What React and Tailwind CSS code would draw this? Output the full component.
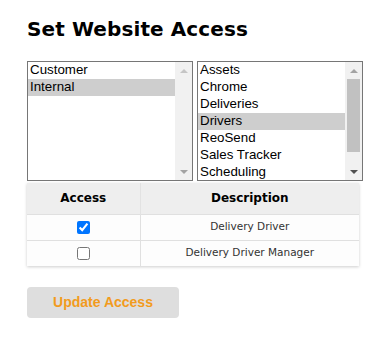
import React, { useState } from 'react';

const groups = ['Customer', 'Internal'];
const sites = ['Assets', 'Chrome', 'Deliveries', 'Drivers', 'ReoSend', 'Sales Tracker', 'Scheduling'];

function ScrollBar({ thumb }) {
  return (
    <div className="w-[17px] shrink-0 bg-[#f1f1f1] flex flex-col items-center">
      <div className="h-[17px] w-full flex items-center justify-center">
        <div className={`w-0 h-0 border-l-[4px] border-r-[4px] border-b-[4px] border-l-transparent border-r-transparent ${thumb ? 'border-b-[#a3a3a3]' : 'border-b-[#c5c5c5]'}`} />
      </div>
      <div className="flex-1 w-full px-[2px]">
        {thumb && <div className="w-full h-[73px] bg-[#c1c1c1]" />}
      </div>
      <div className="h-[17px] w-full flex items-center justify-center">
        <div className={`w-0 h-0 border-l-[4px] border-r-[4px] border-t-[4px] border-l-transparent border-r-transparent ${thumb ? 'border-t-[#505050]' : 'border-t-[#a3a3a3]'}`} />
      </div>
    </div>
  );
}

function ListBox({ items, selected, thumb }) {
  return (
    <div className="w-[166px] h-[120px] border border-[#767676] flex bg-white">
      <div className="flex-1 overflow-hidden">
        {items.map(item => (
          <div
            key={item}
            className={`h-[17px] leading-[16px] pl-[2px] text-[13.33px] text-black ${item === selected ? 'bg-[#cecece]' : ''}`}
          >
            {item}
          </div>
        ))}
      </div>
      <ScrollBar thumb={thumb} />
    </div>
  );
}

export default function App() {
  const [checks, setChecks] = useState([true, false]);
  const roles = ['Delivery Driver', 'Delivery Driver Manager'];

  return (
    <div className="bg-white w-[386px] h-[355px] pl-[27px] pt-[16px] font-['Liberation_Sans',Arial,sans-serif]">
      <h1 className="text-[20px] leading-[26px] font-bold text-black font-['DejaVu_Sans',sans-serif] tracking-[0.1px]">
        Set Website Access
      </h1>

      <div className="flex gap-[4px] mt-[19px]">
        <ListBox items={groups} selected="Internal" />
        <ListBox items={sites} selected="Drivers" thumb />
      </div>

      <table className="w-[332px] border-collapse shadow-[0_1px_3px_rgba(0,0,0,0.2)] mt-[2px] font-['DejaVu_Sans',sans-serif]">
        <thead>
          <tr className="bg-[#eeeeee] h-[31px]">
            <th className="w-[113px] text-[12px] font-bold text-black border-r border-[#e2e2e2]">Access</th>
            <th className="text-[12px] font-bold text-black">Description</th>
          </tr>
        </thead>
        <tbody>
          {roles.map((role, idx) => (
            <tr key={role} className="h-[26px] border-t border-[#e0e0e0] bg-[#fdfdfd]">
              <td className="border-r border-[#e0e0e0] text-center align-middle">
                <input
                  type="checkbox"
                  checked={checks[idx]}
                  onChange={() => setChecks(checks.map((c, i) => (i === idx ? !c : c)))}
                  className="w-[13px] h-[13px] align-middle accent-[#0075ff]"
                />
              </td>
              <td className="text-center text-[10.5px] text-[#333]">{role}</td>
            </tr>
          ))}
        </tbody>
      </table>

      <button className="mt-[21px] w-[152px] h-[31px] rounded-[4px] bg-[#dedede] text-[#f29b1d] text-[14px] font-bold">
        Update Access
      </button>
    </div>
  );
}
